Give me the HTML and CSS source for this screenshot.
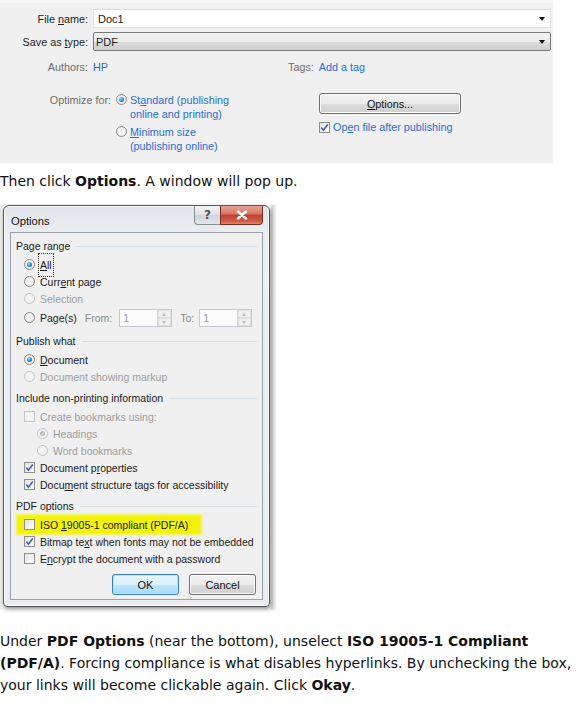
FILE: index.html
```html
<!DOCTYPE html>
<html>
<head>
<meta charset="utf-8">
<link rel="stylesheet" href="styles.css">
</head>
<body>
<div class="save-panel">
  <div class="field-row">
    <span class="field-label">File <u>n</u>ame:</span>
    <div class="field-input text-input"><span>Doc1</span><span class="arrow"></span></div>
  </div>
  <div class="field-row">
    <span class="field-label">Save as <u>t</u>ype:</span>
    <div class="field-input combo"><span>PDF</span><span class="arrow"></span></div>
  </div>
  <div class="meta-row">
    <div class="meta-cell authors"><span class="meta-label">Authors:</span><span class="link">HP</span></div>
    <div class="meta-cell"><span class="meta-label">Tags:</span><span class="link">Add a tag</span></div>
  </div>
  <div class="optimize-row">
    <span class="opt-label">Optimize for:</span>
    <div class="opt-choices">
      <div class="opt-choice"><span class="radio on"></span><span class="link">St<u>a</u>ndard (publishing<br>online and printing)</span></div>
      <div class="opt-choice"><span class="radio"></span><span class="link"><u>M</u>inimum size<br>(publishing online)</span></div>
    </div>
    <div class="opt-actions">
      <div class="btn options-btn"><u>O</u>ptions...</div>
      <div class="opt-check"><span class="check on"><svg viewBox="0 0 11 11" width="11" height="11"><path d="M2.3 5.6 L4.4 8.2 L8.8 2.4" fill="none" stroke="#4a5e98" stroke-width="1.6"/></svg></span><span class="link">Op<u>e</u>n file after publishing</span></div>
    </div>
  </div>
</div>

<p class="lead">Then click <b>Options</b>. A window will pop up.</p>

<div class="shot">
  <div class="dialog">
    <div class="titlebar">
      <span class="title">Options</span>
      <div class="caption-btns">
        <span class="cap-help">?</span>
        <span class="cap-close"><svg viewBox="0 0 14 10" width="14" height="10"><path d="M3 1.5 L11 8.5 M11 1.5 L3 8.5" stroke="#fff" stroke-width="2.4" stroke-linecap="round"/></svg></span>
      </div>
    </div>
    <div class="panel">
      <div class="group first">
        <div class="group-head"><span>Page range</span></div>
        <div class="item"><span class="radio on"></span><span class="focus"><u>A</u>ll</span></div>
        <div class="item"><span class="radio"></span><span>Curr<u>e</u>nt page</span></div>
        <div class="item disabled"><span class="radio"></span><span>Selection</span></div>
        <div class="item pages-row">
          <span class="radio"></span><span>Pa<u>g</u>e(s)</span>
          <span class="spin-label from">From:</span>
          <div class="spin from-box"><span class="spin-val">1</span><span class="spin-btns"><i></i><i></i></span></div>
          <span class="spin-label to">To:</span>
          <div class="spin"><span class="spin-val">1</span><span class="spin-btns"><i></i><i></i></span></div>
        </div>
      </div>
      <div class="group">
        <div class="group-head"><span>Publish what</span></div>
        <div class="item"><span class="radio on"></span><span><u>D</u>ocument</span></div>
        <div class="item disabled"><span class="radio"></span><span>Document showing markup</span></div>
      </div>
      <div class="group">
        <div class="group-head"><span>Include non-printing information</span></div>
        <div class="item disabled"><span class="check"></span><span>Create bookmarks using:</span></div>
        <div class="item disabled sub"><span class="radio on"></span><span>Headings</span></div>
        <div class="item disabled sub"><span class="radio"></span><span>Word bookmarks</span></div>
        <div class="item"><span class="check on"><svg viewBox="0 0 11 11" width="11" height="11"><path d="M2.3 5.6 L4.4 8.2 L8.8 2.4" fill="none" stroke="#4a5e98" stroke-width="1.6"/></svg></span><span>Document p<u>r</u>operties</span></div>
        <div class="item"><span class="check on"><svg viewBox="0 0 11 11" width="11" height="11"><path d="M2.3 5.6 L4.4 8.2 L8.8 2.4" fill="none" stroke="#4a5e98" stroke-width="1.6"/></svg></span><span>Docu<u>m</u>ent structure tags for accessibility</span></div>
      </div>
      <div class="group">
        <div class="group-head"><span>PDF options</span></div>
        <div class="item highlight"><span class="check"></span><span>ISO <u>1</u>9005-1 compliant (PDF/A)</span></div>
        <div class="item"><span class="check on"><svg viewBox="0 0 11 11" width="11" height="11"><path d="M2.3 5.6 L4.4 8.2 L8.8 2.4" fill="none" stroke="#4a5e98" stroke-width="1.6"/></svg></span><span>Bitmap te<u>x</u>t when fonts may not be embedded</span></div>
        <div class="item"><span class="check"></span><span>E<u>n</u>crypt the document with a password</span></div>
      </div>
      <div class="dlg-buttons">
        <div class="btn dlg-btn default">OK</div>
        <div class="btn dlg-btn">Cancel</div>
      </div>
    </div>
  </div>
</div>

<p class="body-text">Under <b>PDF Options</b> (near the bottom), unselect <b>ISO 19005-1 Compliant (PDF/A)</b>. Forcing compliance is what disables hyperlinks. By unchecking the box, your links will become clickable again. Click <b>Okay</b>.</p>
</body>
</html>
```

FILE: styles.css
```css
html, body {
  margin: 0;
  padding: 0;
  background: #fff;
}
body {
  font-family: "DejaVu Sans", Verdana, sans-serif;
  font-size: 14px;
  line-height: 22px;
  color: #111;
}
u { text-decoration: underline; text-underline-offset: 1px; }

/* ---------- Save panel ---------- */
.save-panel {
  width: 553px;
  height: 163px;
  box-sizing: border-box;
  background: #f0f0f0;
  border-top: 3px solid #f6f6f6;
  padding-top: 6px;
  font-family: "Liberation Sans", Arial, sans-serif;
  font-size: 10.8px;
  line-height: 14px;
  color: #1e1e1e;
}
.field-row {
  display: flex;
  align-items: center;
  height: 19px;
  margin-bottom: 4px;
}
.field-label {
  width: 88px;
  text-align: right;
  margin-right: 5px;
  flex: none;
}
.field-input {
  width: 458px;
  height: 19px;
  box-sizing: border-box;
  display: flex;
  align-items: center;
  justify-content: space-between;
  padding: 0 5px 0 4px;
  font-size: 11px;
}
.text-input {
  background: #fff;
  border: 1px solid #e2e3ea;
  border-top-color: #dadada;
}
.combo {
  background: linear-gradient(#f2f2f2, #ebebeb 50%, #dddddd 51%, #cfcfcf);
  border: 1px solid #7a7a7a;
  border-radius: 2px;
  padding-left: 2px;
}
.arrow {
  width: 0;
  height: 0;
  border-left: 3.5px solid transparent;
  border-right: 3.5px solid transparent;
  border-top: 4px solid #111;
}
.meta-row {
  display: flex;
  margin-top: 9px;
  height: 14px;
}
.meta-cell { display: flex; }
.meta-cell.authors { width: 288px; }
.meta-cell.authors .meta-label {
  width: 88px;
  text-align: right;
  margin-right: 5px;
}
.meta-label { color: #6d6d6d; margin-right: 5px; }
.link { color: #2a6dd2; }
.optimize-row {
  display: flex;
  margin-top: 13px;
}
.opt-label {
  width: 111px;
  text-align: right;
  color: #6d6d6d;
  margin-top: 6px;
  flex: none;
}
.opt-choices {
  margin-left: 5px;
  margin-top: 6px;
  width: 203px;
  display: flex;
  flex-direction: column;
  gap: 4px;
}
.opt-choice {
  display: flex;
  align-items: flex-start;
  gap: 3px;
}
.opt-choice .radio { margin-top: 1px; }
.opt-actions {
  display: flex;
  flex-direction: column;
  margin-top: 6px;
}
.btn {
  box-sizing: border-box;
  border: 1px solid #707070;
  border-radius: 3px;
  background: linear-gradient(#f2f2f2, #ebebeb 50%, #dddddd 51%, #cfcfcf);
  box-shadow: inset 0 0 0 1px #fcfcfc;
  display: flex;
  align-items: center;
  justify-content: center;
  color: #111;
}
.options-btn {
  width: 142px;
  height: 21px;
}
.opt-check {
  display: flex;
  align-items: center;
  gap: 3px;
  margin-top: 6px;
}

/* ---------- Radio / check ---------- */
.radio {
  width: 11px;
  height: 11px;
  box-sizing: border-box;
  border-radius: 50%;
  border: 1px solid #8a8a8a;
  background: radial-gradient(circle at 50% 45%, #e6e6e6 0, #f6f6f6 45%, #dcdcdc 100%);
  flex: none;
  position: relative;
}
.radio.on::after {
  content: "";
  position: absolute;
  left: 2px;
  top: 2px;
  width: 5px;
  height: 5px;
  border-radius: 50%;
  background: radial-gradient(circle at 40% 35%, #9fe0ff 0, #2a8ad0 50%, #0b4c8a 100%);
}
.check {
  width: 11px;
  height: 11px;
  box-sizing: border-box;
  border: 1px solid #8e8f8f;
  background: linear-gradient(135deg, #e4e4e4, #fbfbfb);
  flex: none;
  display: flex;
  align-items: center;
  justify-content: center;
}
.check svg { display: block; margin: -1px; }

/* ---------- Paragraphs ---------- */
.lead {
  margin: 7px 0 0;
}
.body-text {
  margin: 20px 0 0;
  width: 580px;
}

/* ---------- Dialog ---------- */
.shot {
  margin-top: 13px;
  height: 405px;
  width: 276px;
  background: linear-gradient(90deg, #e9e9e9 0, #f7f7f7 3px, #fff 4px, #fff 270px, #d7d7d7 272px, #f2f2f2 276px);
  padding-left: 3px;
  box-sizing: border-box;
}
.dialog {
  width: 267px;
  height: 402px;
  box-sizing: border-box;
  border: 1px solid #555;
  border-radius: 6px 6px 4px 4px;
  background: linear-gradient(#e1e5ea, #eceef1 30px, #eaecef);
  box-shadow: 1px 2px 4px rgba(0,0,0,0.45), inset 0 0 0 1px rgba(255,255,255,0.8);
  padding: 0 6px 9px 6px;
  display: flex;
  flex-direction: column;
  font-family: "Liberation Sans", Arial, sans-serif;
  font-size: 10.5px;
  color: #1b1b1b;
}
.titlebar {
  height: 26px;
  display: flex;
  justify-content: space-between;
  align-items: flex-start;
  flex: none;
}
.title {
  margin-top: 8px;
  margin-left: 1px;
  font-size: 11.2px;
  line-height: 14px;
  color: #111;
}
.caption-btns {
  display: flex;
}
.cap-help {
  width: 26px;
  height: 19px;
  box-sizing: border-box;
  border: 1px solid #8a8f96;
  border-top: none;
  border-right: none;
  border-radius: 0 0 0 4px;
  background: linear-gradient(#f2f4f6, #dde1e6 50%, #cfd4da 51%, #e2e6ea);
  color: #555;
  font-size: 12px;
  font-weight: bold;
  display: flex;
  align-items: center;
  justify-content: center;
  font-family: "DejaVu Sans", sans-serif;
}
.cap-close {
  width: 43px;
  height: 19px;
  box-sizing: border-box;
  border: 1px solid #7a2e25;
  border-top: none;
  border-radius: 0 0 4px 0;
  background: linear-gradient(#e8a493, #d47563 45%, #c2412f 50%, #d05b44 85%, #e08b6e);
  display: flex;
  align-items: center;
  justify-content: center;
}
.cap-close svg { display: block; }
.panel {
  flex: 1;
  box-sizing: border-box;
  border: 1px solid #9aa3ad;
  background: #f0f0f0;
  padding: 3px 5px 4px 5px;
  display: flex;
  flex-direction: column;
}
.group { margin-top: 3px; }
.group.first { margin-top: 0; }
.group-head {
  height: 20px;
  display: flex;
  align-items: center;
  gap: 6px;
}
.group-head::after {
  content: "";
  flex: 1;
  height: 1px;
  background: #d5dfe5;
}
.item {
  height: 17px;
  display: flex;
  align-items: center;
  padding-left: 8px;
  gap: 5px;
}
.item.sub { padding-left: 21px; }
.item.disabled { color: #9c9c9c; }
.item.disabled .radio, .item.disabled .check {
  border-color: #c4c4c4;
  background: #f3f3f3;
}
.item.disabled .radio.on::after {
  background: radial-gradient(circle, #cfcfcf, #a9a9a9);
}
.focus {
  outline: 1px dotted #333;
  outline-offset: 0;
  padding: 0 1px;
  margin-left: -1px;
}
.pages-row { height: 21px; }
.spin-label { color: #8a8a8a; }
.spin-label.from { margin-left: 3px; }
.spin-label.to { margin-left: 3px; }
.spin.from-box { margin-left: 2px; }
.spin {
  width: 53px;
  height: 18px;
  box-sizing: border-box;
  border: 1px solid #c5c9cf;
  background: #fbfbfb;
  display: flex;
  justify-content: space-between;
  color: #999;
}
.spin-val { padding-left: 3px; line-height: 16px; }
.spin-btns {
  width: 13px;
  display: flex;
  flex-direction: column;
  border-left: 1px solid #d5d5d5;
}
.spin-btns i {
  flex: 1;
  background: #f1f1f1;
  border: 1px solid #e0e0e0;
  position: relative;
}
.spin-btns i::after {
  content: "";
  position: absolute;
  left: 3px;
  top: 2px;
  border-left: 2.5px solid transparent;
  border-right: 2.5px solid transparent;
  border-bottom: 3px solid #b8b8b8;
}
.spin-btns i + i::after {
  border-bottom: none;
  border-top: 3px solid #b8b8b8;
  top: 2px;
}
.highlight {
  align-self: flex-start;
  width: 182px;
  box-sizing: border-box;
  margin-left: 2px;
  padding-left: 6px;
  background: #f2f20a;
  box-shadow: 0 0 2px 2px #f4f43a;
}
.dlg-buttons {
  display: flex;
  justify-content: flex-end;
  gap: 10px;
  margin-top: 7px;
  padding-right: 1px;
}
.dlg-btn {
  width: 67px;
  height: 21px;
  font-size: 11px;
}
.dlg-btn.default {
  border-color: #3c7fb1;
  box-shadow: inset 0 0 0 1px #b9e4f9;
  background: linear-gradient(#eaf6fd, #d9f0fc 50%, #bee6fd 51%, #a7d9f5);
}
```
